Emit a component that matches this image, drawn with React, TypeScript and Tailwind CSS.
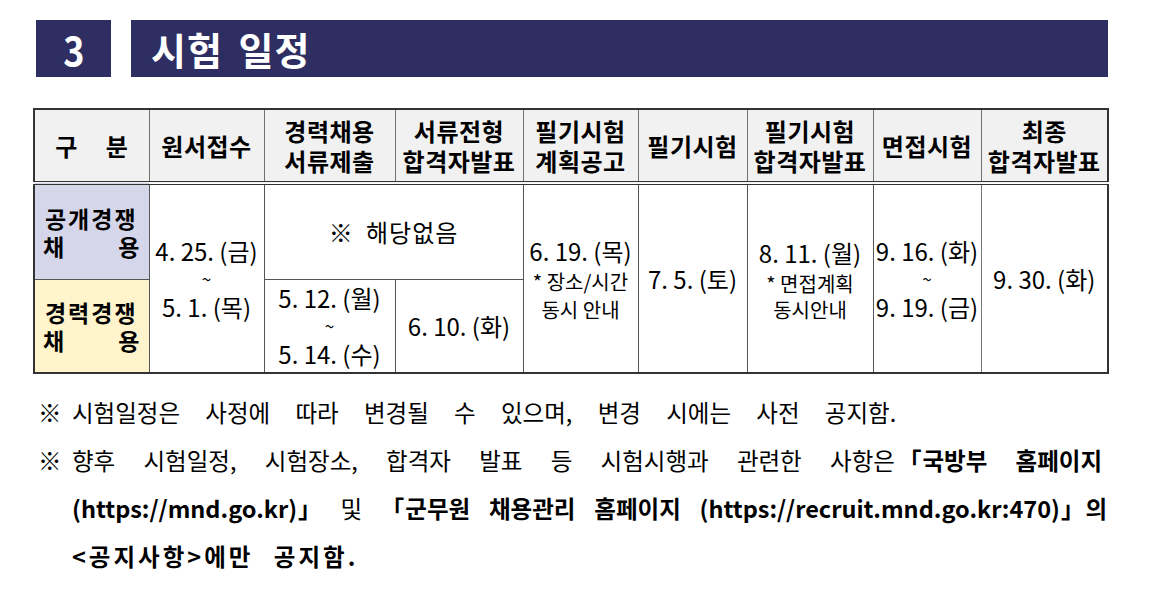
import React from "react";

const F = { fontFamily: '"Noto Sans CJK KR", "Noto Sans", sans-serif' };

function H({ children }: { children: React.ReactNode }) {
  return (
    <th className="border border-[#707070] border-b-[4px] border-b-[#333] border-double bg-[#f1f1f1] p-0 text-center align-middle text-[24px] font-bold leading-[30px] tracking-[0.5px] text-black">
      {children}
    </th>
  );
}

function Label({ top, bottom, bg }: { top: string; bottom: string[]; bg: string }) {
  return (
    <td className={`border border-[#555] pl-[8px] pr-[9px] text-[23px] font-bold leading-[28px] text-black ${bg}`}>
      <div className="tracking-[2px] whitespace-nowrap">{top}</div>
      <div className="flex justify-between">
        <span>{bottom[0]}</span>
        <span>{bottom[1]}</span>
      </div>
    </td>
  );
}

export default function App() {
  return (
    <div className="h-[604px] w-[1149px] bg-white text-black" style={F}>
      {/* Section header */}
      <div className="flex pl-[36px] pr-[41px] pt-[20px]">
        <div className="flex h-[57px] w-[75px] items-center justify-center bg-[#2e2e62]">
          <span className="inline-block scale-x-90 text-[40px] font-bold leading-none text-white">3</span>
        </div>
        <div className="ml-[20px] flex h-[57px] flex-1 items-center bg-[#2e2e62] pl-[20px]">
          <span className="text-[38px] font-bold leading-none tracking-[1px] text-white [word-spacing:6px]">시험 일정</span>
        </div>
      </div>

      {/* Table */}
      <div className="pl-[33px] pt-[31px]">
        <table className="w-[1074px] table-fixed border-collapse border-2 border-[#333]">
          <colgroup>
            <col className="w-[115px]" />
            <col className="w-[115px]" />
            <col className="w-[131px]" />
            <col className="w-[128px]" />
            <col className="w-[115px]" />
            <col className="w-[109px]" />
            <col className="w-[126px]" />
            <col className="w-[108px]" />
            <col className="w-[127px]" />
          </colgroup>
          <thead>
            <tr className="h-[74px]">
              <H>
                <span className="[word-spacing:22px]">구 분</span>
              </H>
              <H>원서접수</H>
              <H>
                경력채용
                <br />
                서류제출
              </H>
              <H>
                서류전형
                <br />
                합격자발표
              </H>
              <H>
                필기시험
                <br />
                계획공고
              </H>
              <H>필기시험</H>
              <H>
                필기시험
                <br />
                합격자발표
              </H>
              <H>면접시험</H>
              <H>
                최종
                <br />
                합격자발표
              </H>
            </tr>
          </thead>
          <tbody className="text-center text-[24px] leading-[28px]">
            <tr className="h-[96px]">
              <Label top="공개경쟁" bottom={["채", "용"]} bg="bg-[#d6d6ea]" />
              <td rowSpan={2} className="border border-[#555] whitespace-nowrap">
                <div>4. 25. (금)</div>
                <div className="text-[17px] leading-[28px]">~</div>
                <div>5. 1. (목)</div>
              </td>
              <td colSpan={2} className="border border-[#555]">
                <span className="tracking-[1px] [word-spacing:6px]">※ 해당없음</span>
              </td>
              <td rowSpan={2} className="border border-[#555] whitespace-nowrap">
                <div className="leading-[34px]">6. 19. (목)</div>
                <div className="text-[20px] leading-[28px]">* 장소/시간</div>
                <div className="text-[20px] leading-[28px]">동시 안내</div>
              </td>
              <td rowSpan={2} className="border border-[#555] whitespace-nowrap">
                7. 5. (토)
              </td>
              <td rowSpan={2} className="border border-[#555] whitespace-nowrap">
                <div className="leading-[36px]">8. 11. (월)</div>
                <div className="text-[20px] leading-[26px]">* 면접계획</div>
                <div className="text-[20px] leading-[26px]">동시안내</div>
              </td>
              <td rowSpan={2} className="border border-[#777] whitespace-nowrap">
                <div>9. 16. (화)</div>
                <div className="text-[17px] leading-[28px]">~</div>
                <div>9. 19. (금)</div>
              </td>
              <td rowSpan={2} className="border border-[#777] whitespace-nowrap">
                9. 30. (화)
              </td>
            </tr>
            <tr className="h-[94px]">
              <Label top="경력경쟁" bottom={["채", "용"]} bg="bg-[#fff4cc]" />
              <td className="border border-[#555] whitespace-nowrap">
                <div>5. 12. (월)</div>
                <div className="text-[17px] leading-[28px]">~</div>
                <div>5. 14. (수)</div>
              </td>
              <td className="border border-[#555] whitespace-nowrap">6. 10. (화)</td>
            </tr>
          </tbody>
        </table>
      </div>

      {/* Notes */}
      <div className="w-[1107px] pl-[38px] pt-[14px] text-[23.5px] leading-[48px] text-black">
        <div className="flex">
          <span className="w-[34px] shrink-0">※</span>
          <span className="whitespace-nowrap [word-spacing:20px]">시험일정은 사정에 따라 변경될 수 있으며, 변경 시에는 사전 공지함.</span>
        </div>
        <div className="flex">
          <span className="w-[34px] shrink-0">※</span>
          <div className="flex-1 pr-[5px] text-justify whitespace-nowrap [text-align-last:justify]">
            향후 시험일정, 시험장소, 합격자 발표 등 시험시행과 관련한{" "}
            <span className="inline-block">
              사항은
              <b className="ml-[3px] mr-[1px] font-bold">「</b>
              <b className="font-bold">국방부</b>
            </span>{" "}
            <b className="font-bold">홈페이지</b>
          </div>
        </div>
        <div className="pl-[34px] text-justify whitespace-nowrap [text-align-last:justify]">
          <b className="inline-block font-bold">
            (https://mnd.go.kr)<span className="ml-[1px]">」</span>
          </b>{" "}
          및{" "}
          <b className="inline-block font-bold">
            <span className="mr-[1px]">「</span>군무원
          </b>{" "}
          <b className="font-bold">채용관리</b> <b className="font-bold">홈페이지</b>{" "}
          <b className="inline-block font-bold">
            (https://recruit.mnd.go.kr:470)<span className="ml-[1px] mr-[1px]">」</span>의
          </b>
        </div>
        <div className="pl-[34px] font-bold tracking-[3px] [word-spacing:12px]">&lt;공지사항&gt;에만 공지함.</div>
      </div>
    </div>
  );
}
